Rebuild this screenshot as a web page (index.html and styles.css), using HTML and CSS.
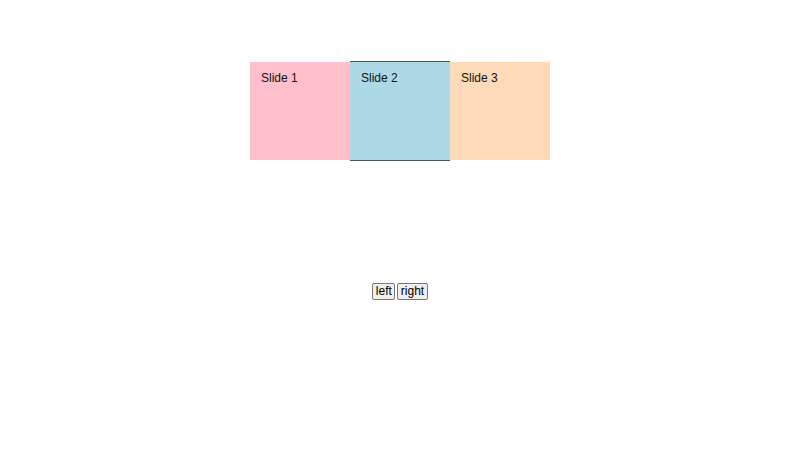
FILE: index.html
```html
<!DOCTYPE html>
<html lang="en">
<head>
<meta charset="UTF-8">
<meta name="viewport" content="width=device-width, initial-scale=1.0">
<title>Slider</title>
<link rel="stylesheet" href="styles.css">
</head>
<body>

  <div class="slider">
    <div class="track">
      <div class="slide pink">Slide 1</div>
      <div class="slide blue active">Slide 2</div>
      <div class="slide peach">Slide 3</div>
    </div>
  </div>

  <div class="controls">
    <button type="button" class="ctrl">left</button>
    <button type="button" class="ctrl">right</button>
  </div>

</body>
</html>
```

FILE: styles.css
```css
* {
  box-sizing: border-box;
}

body {
  margin: 0;
  background: #fff;
  font-family: "Liberation Sans", Arial, sans-serif;
}

.slider {
  width: 300px;
  margin: 61px auto 0;
}

.track {
  display: flex;
}

.slide {
  width: 100px;
  height: 100px;
  padding: 9px 11px;
  font-size: 12px;
  color: #111;
  border-top: 1px solid #fff;
  border-bottom: 1px solid #fff;
}

.pink {
  background: pink;
}

.blue {
  background: lightblue;
}

.peach {
  background: peachpuff;
}

.slide.active {
  border-color: #4a5560;
}

.controls {
  display: flex;
  justify-content: center;
  gap: 2px;
  margin-top: 122px;
}

.ctrl {
  font-family: "Liberation Sans", Arial, sans-serif;
  font-size: 12px;
  padding: 1px 2.5px;
  height: 17px;
  line-height: 13px;
  color: #000;
  background: #efefef;
  border: 1px solid #767676;
  border-radius: 2px;
}
```
